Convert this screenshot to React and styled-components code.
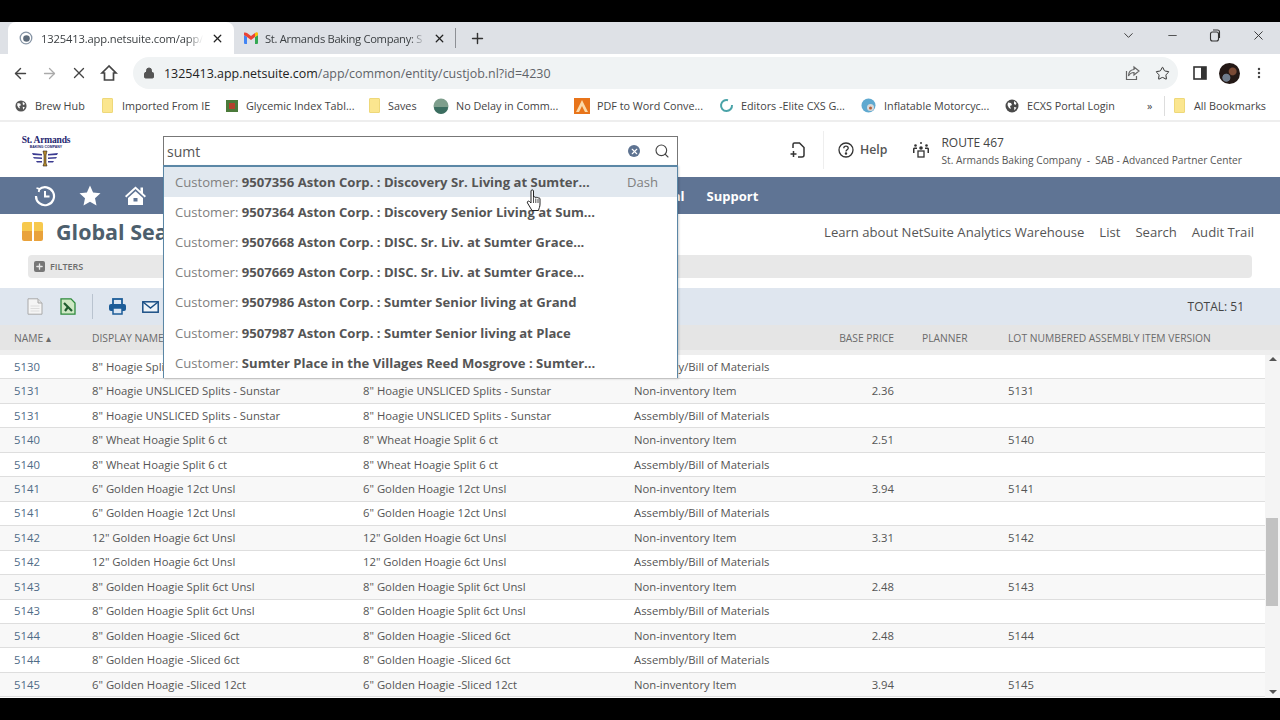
import React from "react";
import styled, { createGlobalStyle } from "styled-components";
import { ArrowLeft, ArrowRight, X, Lock, Star, Plus, ChevronDown, Minus, MoreVertical, Search } from "lucide-react";

const Global = createGlobalStyle`
  html, body { margin: 0; padding: 0; background: #fff; overflow: hidden; }
  * { box-sizing: border-box; }
  #root { width: 1280px; height: 720px; overflow: hidden; }
`;

const Page = styled.div`
  width: 1280px; height: 720px; display: flex; flex-direction: column;
  background: #000; font-family: "Open Sans", sans-serif; color: #444; overflow: hidden;
`;
const Letterbox = styled.div`height: ${p => p.$h}px; flex: none; background: #000;`;

/* browser chrome */
const TabStrip = styled.div`
  height: 32px; flex: none; background: #dee1e6; display: flex; align-items: stretch; padding-left: 8px; position: relative;
`;
const Tab = styled.div`
  width: ${p => p.$w}px; display: flex; align-items: center; padding-left: ${p => p.$pad}px; gap: ${p => p.$gap}px;
  border-radius: 8px 8px 0 0; background: ${p => (p.$active ? "#fff" : "transparent")};
  font: 11.2px "Open Sans", sans-serif; color: #3c4043; letter-spacing: ${p => p.$track ?? 0}px;
  svg { flex: none; }
`;
const TabTitle = styled.span`
  flex: 1; min-width: 0; overflow: hidden; white-space: nowrap;
  mask-image: linear-gradient(to right, #000 90%, transparent 100%);
  -webkit-mask-image: linear-gradient(to right, #000 90%, transparent 100%);
`;
const TabClose = styled.span`display: flex; flex: none; margin-right: ${p => p.$mr}px; color: #222;`;
const TabDivider = styled.span`width: 1px; height: 20px; background: #8d9095; align-self: center;`;
const NewTab = styled.span`display: flex; margin-left: 13px; align-self: center; color: #333;`;
const WindowControls = styled.div`
  margin-left: auto; display: flex; align-items: center; color: #333; padding: 0 14px 6px 0; gap: 30px;
`;
const Toolbar = styled.div`
  height: 38px; flex: none; background: #fff; display: flex; align-items: center; padding-left: 12px; color: #444;
`;
const NavIcons = styled.div`display: flex; align-items: center; gap: 12px; width: 121px;`;
const AddressBar = styled.div`
  width: 1045px; height: 32px; border-radius: 16px; background: #f0f3f4; display: flex; align-items: center;
  padding: 0 8px 0 10px; font: 12.45px "Open Sans", sans-serif; color: #5f6368;
`;
const UrlHost = styled.span`color: #222;`;
const UrlText = styled.span`margin-left: 9px; flex: 1; white-space: nowrap;`;
const AddressActions = styled.div`display: flex; align-items: center; gap: 14px; color: #444;`;
const ToolRight = styled.div`display: flex; align-items: center; margin-left: 15px; gap: 12px;`;
const Avatar = styled.span`
  width: 21px; height: 21px; border-radius: 50%;
  background: radial-gradient(circle at 35% 70%, #6f7c8c 0 18%, transparent 22%), radial-gradient(circle at 65% 40%, #7a4a35 0 18%, #231815 24%);
`;
const Bookmarks = styled.div`
  height: 30px; flex: none; background: #fff; display: flex; align-items: center; padding: 0 0 1px 15px;
  border-bottom: 2px solid #eee; font: 10.8px "Open Sans", sans-serif; color: #444;
`;
const Bookmark = styled.span`
  display: flex; align-items: center; gap: ${p => p.$gap ?? 8}px; width: ${p => p.$w}px; white-space: nowrap; flex: none;
`;
const FolderMark = styled.span`width: 11px; height: 15px; background: #fbe68f; border: 1px solid #eed879; border-radius: 1px; flex: none;`;
const BookmarkDivider = styled.span`width: 1px; height: 20px; background: #ddd; margin: 0 9px 0 5px;`;

/* app header */
const Header = styled.div`height: 55px; flex: none; background: #fff; display: flex; align-items: center; position: relative;`;
const Logo = styled.div`
  width: 163px; padding-left: 21px; display: flex; flex-direction: column; align-items: flex-start; margin-top: 3px; color: #25256f;
`;
const LogoName = styled.span`font: bold 9.5px/10px "Liberation Serif", serif; width: 50px; text-align: center; white-space: nowrap; letter-spacing: -0.2px;`;
const LogoSub = styled.span`font: bold 3.5px/5px "Liberation Sans", sans-serif; width: 50px; text-align: center; white-space: nowrap;`;
const LogoMark = styled.svg`margin-left: 9px; display: block;`;
const SearchWrap = styled.div`width: 515px; height: 30px; position: relative; align-self: flex-start; margin-top: 14px;`;
const SearchBox = styled.div`
  height: 30px; border: 1px solid #777; background: #fff; display: flex; align-items: center; padding: 0 7px 0 3px; color: #555;
  font: 14px "Open Sans", sans-serif;
`;
const SearchValue = styled.span`flex: 1;`;
const SearchClear = styled.span`
  width: 12px; height: 12px; border-radius: 50%; background: #5e7391; color: #fff; display: flex; align-items: center; justify-content: center; margin-right: 14px;
`;
const Dropdown = styled.div`
  position: absolute; top: 29px; left: 0; width: 515px; height: 213px; background: #fff; z-index: 5;
  border: 1px solid #5b87a6; border-top-width: 2px; box-shadow: 1px 1px 2px rgba(0,0,0,.18);
`;
const Suggestion = styled.div`
  height: 30.1px; display: flex; align-items: center; padding: 0 19px 0 11px; position: relative;
  background: ${p => (p.$active ? "#e1e8ef" : "#fff")}; font: 13.1px "Open Sans", sans-serif; color: #808080; white-space: nowrap;
`;
const SuggestionName = styled.b`color: #555; font-weight: 700; margin-left: 3.5px; flex: 1;`;
const SuggestionKind = styled.span`color: #808080;`;
const Cursor = styled.svg`position: absolute; left: 362px; top: 22px; z-index: 6;`;
const HeaderTools = styled.div`display: flex; align-items: center; margin-left: 111px; color: #333;`;
const ToolDivider = styled.span`width: 1px; height: 38px; background: #eee; margin: 0 14px 0 16px;`;
const HelpLabel = styled.span`font: 600 12.3px "Open Sans", sans-serif; color: #555; margin: 0 25px 0 6px;`;
const Role = styled.div`display: flex; flex-direction: column; margin: 4px 0 0 11px; gap: 3px;`;
const RoleName = styled.span`font: 12px/14px "Open Sans", sans-serif; color: #444;`;
const RoleCompany = styled.span`font: 10.2px/14px "Open Sans", sans-serif; color: #555; white-space: pre;`;

/* navigation */
const Nav = styled.div`
  height: 37px; flex: none; background: #5f7494; display: flex; align-items: center; padding-left: 34px; color: #fff;
`;
const NavIconSet = styled.div`display: flex; align-items: center; gap: 23px;`;
const NavLink = styled.span`
  font: 700 13px "Open Sans", sans-serif; color: #fff; white-space: nowrap; margin: 1px 0 0 ${p => p.$ml}px;
`;

/* page title */
const TitleRow = styled.div`
  height: 41px; flex: none; background: #fff; display: flex; align-items: center; padding: 0 26px 0 22px; position: relative;
`;
const TitleIcon = styled.span`
  width: 21px; height: 19px; margin-top: -7px; border-radius: 2px;
  background: linear-gradient(#f7c94d 0 45%, #e9a23b 45%);
  display: flex; justify-content: center;
`;
const TitleSplit = styled.span`width: 2px; height: 100%; background: #fff;`;
const Title = styled.h1`
  margin: -7px 0 0 13px; font: 700 21.5px "Open Sans", sans-serif; color: #4d5f6d;
`;
const TitleLinks = styled.div`margin-left: auto; display: flex; gap: 15px; font: 13.1px "Open Sans", sans-serif; color: #555; margin-top: -6px;`;
const FilterBar = styled.div`height: 33px; flex: none; background: #fff; padding: 0 28px; display: flex; align-items: flex-start;`;
const FilterInner = styled.div`
  height: 23px; flex: 1; background: #e8e8e8; border-radius: 4px; display: flex; align-items: center; padding: 0 0 1px 6px;
  font: 600 9px "Open Sans", sans-serif; color: #6c6c6c; gap: 5px;
`;
const FilterPlus = styled.span`
  width: 11px; height: 11px; border-radius: 2px; background: #777; color: #e8e8e8; display: flex; align-items: center; justify-content: center;
`;
const ListTools = styled.div`
  height: 37px; flex: none; background: #dfe6ef; display: flex; align-items: center; padding: 0 36px 0 27px;
`;
const ToolIconSet = styled.div`display: flex; align-items: center; gap: ${p => p.$gap}px;`;
const ToolSep = styled.span`width: 1px; height: 25px; background: #b9c3cf; margin: 0 15px 0 16px;`;
const Total = styled.span`margin-left: auto; font: 12px "Open Sans", sans-serif; color: #444;`;

/* table */
const columns = "92px 271px 271px 180px 80px 114px 1fr";
const HeadRow = styled.div`
  height: 25px; flex: none; display: grid; grid-template-columns: ${columns}; align-items: center; background: #e5e5e5;
  font: 10.3px "Open Sans", sans-serif; color: #6b6b6b; text-transform: uppercase; white-space: nowrap;
`;
const Gap = styled.div`height: 5px; flex: none; background: #eee;`;
const Body = styled.div`flex: 1; min-height: 0; display: flex; background: #fff; overflow: hidden;`;
const Rows = styled.div`flex: 1; min-width: 0; display: grid; grid-auto-rows: 24.46px;`;
const Row = styled.div`
  display: grid; grid-template-columns: ${columns}; align-items: center; white-space: nowrap; padding-bottom: 1px;
  font: 11.3px "Open Sans", sans-serif; color: #555;
  background: ${p => (p.$tint ? "#f8f8f8" : "#fff")}; border-bottom: 1px solid #dedede;
`;
const NameCell = styled.span`padding-left: 14px;`;
const IdLink = styled.span`color: #4f6b87; padding-left: 14px;`;
const PriceCell = styled.span`text-align: right;`;
const PlannerCell = styled.span`padding-left: 28px;`;
const Scrollbar = styled.div`
  width: 15px; flex: none; background: #f4f4f4; display: flex; flex-direction: column; align-items: center; justify-content: space-between; padding: 2px 0 4px; position: relative;
`;
const ScrollThumb = styled.div`
  position: absolute; top: 163px; left: 1px; width: 12px; height: 88px; background: #c2c2c2;
`;
const Arrow = styled.span`
  width: 0; height: 0; border-left: 4px solid transparent; border-right: 4px solid transparent;
  ${p => (p.$up ? "border-bottom: 4px solid #555;" : "border-top: 4px solid #555;")}
`;

const Gmail = () => (
  <svg width="14" height="12" viewBox="0 0 14 12">
    <path d="M0 3v8a1 1 0 0 0 1 1h2V5z" fill="#4285f4" />
    <path d="M14 3v8a1 1 0 0 1-1 1h-2V5z" fill="#34a853" />
    <path d="M0 3l3 2 4 3 4-3V1l-4 3-4-3L1 0.4C.4 0.2 0 1 0 2z" fill="#ea4335" />
    <path d="M11 1l1.3-.7C13.2 0 14 .7 14 1.6V3l-3 2z" fill="#fbbc04" />
  </svg>
);
const Globe = ({ c = "#555", s = 14 }) => (
  <svg width={s} height={s} viewBox="0 0 14 14">
    <circle cx="7" cy="7" r="6.5" fill={c} />
    <path d="M3 3.5l3 .5 1 2-2 1 1 3-2-1-1.500-3zM9 2l2.500 2-1 2-1.500-1zM9 8l2.500.5-2 3z" fill="#fff" />
  </svg>
);
const Restore = () => (
  <svg width="12" height="13" viewBox="0 0 12 13" fill="none" stroke="#333" strokeWidth="1.100">
    <rect x="1.500" y="3" width="8" height="9" rx="2" />
    <path d="M4 1h4.500A2 2 0 0 1 10.500 3v6" />
  </svg>
);
const BrowserHome = () => (
  <svg width="18" height="18" viewBox="0 0 18 18" fill="none" stroke="#444" strokeWidth="1.700" strokeLinejoin="miter">
    <path d="M9 2L2 9h2.500v7h9V9H16z" />
  </svg>
);
const Share = () => (
  <svg width="16" height="16" viewBox="0 0 16 16" fill="none" stroke="#666" strokeWidth="1.200">
    <path d="M9 2l5 4-5 4V7.500C6 7.500 4.500 9 3.500 11 3.500 7.500 5.500 4.800 9 4.500z" />
    <path d="M1.500 6v8.500h10V11" />
  </svg>
);
const SidePanel = () => (
  <svg width="14" height="14" viewBox="0 0 14 14">
    <rect x="1" y="1" width="12" height="12" fill="#fff" stroke="#333" strokeWidth="1.600" />
    <rect x="8" y="1" width="5" height="12" fill="#333" />
  </svg>
);
const ChromeLoad = () => (
  <svg width="14" height="14" viewBox="0 0 14 14" fill="none">
    <circle cx="7" cy="7" r="5.800" stroke="#8795a5" strokeWidth="1.300" />
    <circle cx="7.500" cy="7.500" r="3.300" fill="#5d6b7a" />
  </svg>
);
const AppIconAdd = () => (
  <svg width="18" height="18" viewBox="0 0 18 18" fill="none" stroke="#333" strokeWidth="1.500">
    <path d="M4 7V3.500C4 3 4.400 2 5.500 2H10.500L15 6.500V14C15 15 14.300 16 13 16H9" />
    <path d="M4.500 10v6M1.500 13h6" />
  </svg>
);
const HelpIcon = () => (
  <svg width="16" height="16" viewBox="0 0 16 16" fill="none" stroke="#333" strokeWidth="1.300">
    <circle cx="8" cy="8" r="7" />
    <path d="M5.800 6.300C5.800 5 6.800 4.200 8 4.200S10.200 5 10.200 6.200C10.200 7.600 8 7.900 8 9.400" />
    <circle cx="8" cy="11.500" r=".6" fill="#333" />
  </svg>
);
const RoleIcon = () => (
  <svg width="18" height="18" viewBox="0 0 18 18" fill="#333">
    <rect x="6" y="10" width="6" height="6" fill="none" stroke="#333" strokeWidth="1.300" />
    <circle cx="9" cy="7" r="1.800" />
    <circle cx="9" cy="2" r="1" />
    <circle cx="3.500" cy="4.500" r="1.300" />
    <circle cx="14.500" cy="4.500" r="1.300" />
    <path d="M1 12V8c0-1 .7-1.500 1.500-1.500H5V8H2.500v4zM17 12V8c0-1-.7-1.500-1.500-1.500H13V8h2.500v4z" />
  </svg>
);
const HistoryIcon = () => (
  <svg width="22" height="22" viewBox="0 0 22 22" fill="none" stroke="#fff" strokeWidth="2.200">
    <path d="M5 4.500A9 9 0 1 1 2 11" />
    <path d="M2.500 3l3 .8-.8 3.200" strokeWidth="1.800" />
    <path d="M11 6v5.500h4.500" strokeWidth="2" />
  </svg>
);
const NavStar = () => (
  <svg width="22" height="21" viewBox="0 0 22 21">
    <path d="M11 0.500l3.100 6.900 7.400.8-5.500 5 1.500 7.300L11 16.800 4.500 20.500 6 13.200.5 8.200l7.400-.8z" fill="#fff" />
  </svg>
);
const HomeIcon = () => (
  <svg width="23" height="21" viewBox="0 0 23 21">
    <path d="M11.500 1.500L1 11l1.300 1.400L11.500 4l9.200 8.400L22 11l-3-2.700V2.500h-2.500v3.500z" fill="#fff" />
    <path d="M4 13l7.500-6.800L19 13v7H4z" fill="#fff" />
    <rect x="9.500" y="13" width="4" height="3.500" fill="#5f7494" />
  </svg>
);
const DocIcon = () => (
  <svg width="16" height="17" viewBox="0 0 16 17">
    <path d="M1 .8h10L15 5v11.200H1z" fill="#f5f5f5" stroke="#a9a9a9" />
    <path d="M11 1v4h4" fill="#e3e3e3" stroke="#a9a9a9" />
    <path d="M3.500 8h9M3.500 10.500h9M3.500 13h9" stroke="#ddd" />
  </svg>
);
const ExcelIcon = () => (
  <svg width="16" height="17" viewBox="0 0 16 17">
    <path d="M1 .8h10L15 5v11.200H1z" fill="#cfe8c4" stroke="#2f8a3c" strokeWidth="1.300" />
    <path d="M4 5l8 8M5 13l3-4" stroke="#1f5d2e" strokeWidth="2.200" />
  </svg>
);
const PrintIcon = () => (
  <svg width="19" height="17" viewBox="0 0 19 17">
    <rect x="5" y="1" width="9" height="6" fill="#dbe6f3" stroke="#1c5c98" strokeWidth="1.800" />
    <rect x="1" y="6" width="17" height="7" rx="2" fill="#1c5c98" />
    <rect x="5" y="10" width="9" height="6" fill="#dbe6f3" stroke="#1c5c98" strokeWidth="1.500" />
  </svg>
);
const MailIcon = () => (
  <svg width="17" height="12" viewBox="0 0 17 12" fill="#eef3f8" stroke="#1b4f85" strokeWidth="1.500">
    <rect x=".8" y=".8" width="15.400" height="10.400" />
    <path d="M1 1l7.500 6L16 1" fill="none" />
  </svg>
);
const LogoEmblem = () => (
  <LogoMark width="30" height="17" viewBox="0 0 30 17">
    <path d="M2 3l10 1v1.500L3 5zM28 3L18 4v1.500L27 5zM3 7l9 .5V9L4 8.500zM27 7l-9 .5V9l8-.5zM6 11l6 0v1.500H7zM24 11l-6 0v1.500h5z" fill="#3a3a90" />
    <path d="M13 1h4l-1 4v8l1 3h-4l1-3V5z" fill="#b58a2a" stroke="#2c2020" strokeWidth=".6" />
  </LogoMark>
);
const Hand = () => (
  <Cursor width="16" height="24" viewBox="0 0 16 24">
    <path d="M5 2c0-1.500 2.500-1.500 2.500 0v6.500c.3-1 2.200-1 2.300.3.400-.9 2-.8 2.200.4.500-.6 2-.5 2 .8v5c0 3-1 4-1.500 6.500H6L1.500 14c-.8-1.200.7-2.600 2-1.500L5 14z" fill="#fff" stroke="#222" strokeWidth="1" />
    <path d="M7.500 9v5M9.800 9.500V14M12 10v4" stroke="#222" strokeWidth=".8" />
  </Cursor>
);

const suggestions = [
  ["9507356 Aston Corp. : Discovery Sr. Living at Sumter...", "Dash"],
  ["9507364 Aston Corp. : Discovery Senior Living at Sum..."],
  ["9507668 Aston Corp. : DISC. Sr. Liv. at Sumter Grace..."],
  ["9507669 Aston Corp. : DISC. Sr. Liv. at Sumter Grace..."],
  ["9507986 Aston Corp. : Sumter Senior living at Grand"],
  ["9507987 Aston Corp. : Sumter Senior living at Place"],
  ["Sumter Place in the Villages Reed Mosgrove : Sumter..."],
];

const NI = "Non-inventory Item";
const AB = "Assembly/Bill of Materials";
const rows = [
  ["5130", '8" Hoagie Splits', "", AB, "", ""],
  ["5131", '8" Hoagie UNSLICED Splits - Sunstar', '8" Hoagie UNSLICED Splits - Sunstar', NI, "2.36", "5131"],
  ["5131", '8" Hoagie UNSLICED Splits - Sunstar', '8" Hoagie UNSLICED Splits - Sunstar', AB, "", ""],
  ["5140", '8" Wheat Hoagie Split 6 ct', '8" Wheat Hoagie Split 6 ct', NI, "2.51", "5140"],
  ["5140", '8" Wheat Hoagie Split 6 ct', '8" Wheat Hoagie Split 6 ct', AB, "", ""],
  ["5141", '6" Golden Hoagie 12ct Unsl', '6" Golden Hoagie 12ct Unsl', NI, "3.94", "5141"],
  ["5141", '6" Golden Hoagie 12ct Unsl', '6" Golden Hoagie 12ct Unsl', AB, "", ""],
  ["5142", '12" Golden Hoagie 6ct Unsl', '12" Golden Hoagie 6ct Unsl', NI, "3.31", "5142"],
  ["5142", '12" Golden Hoagie 6ct Unsl', '12" Golden Hoagie 6ct Unsl', AB, "", ""],
  ["5143", '8" Golden Hoagie Split 6ct Unsl', '8" Golden Hoagie Split 6ct Unsl', NI, "2.48", "5143"],
  ["5143", '8" Golden Hoagie Split 6ct Unsl', '8" Golden Hoagie Split 6ct Unsl', AB, "", ""],
  ["5144", '8" Golden Hoagie -Sliced 6ct', '8" Golden Hoagie -Sliced 6ct', NI, "2.48", "5144"],
  ["5144", '8" Golden Hoagie -Sliced 6ct', '8" Golden Hoagie -Sliced 6ct', AB, "", ""],
  ["5145", '6" Golden Hoagie -Sliced 12ct', '6" Golden Hoagie -Sliced 12ct', NI, "3.94", "5145"],
];

export default function App() {
  return (
    <Page>
      <Global />
      <Letterbox $h={22} />
      <TabStrip>
        <Tab $active $w={226} $pad={11} $gap={8} $track={-0.15}>
          <ChromeLoad />
          <TabTitle>1325413.app.netsuite.com/app/</TabTitle>
          <TabClose $mr={10}><X size={13} strokeWidth={2.4} /></TabClose>
        </Tab>
        <Tab $w={221} $pad={10} $gap={7} $track={-0.3}>
          <Gmail />
          <TabTitle>St. Armands Baking Company: S</TabTitle>
          <TabClose $mr={9}><X size={13} strokeWidth={2.4} /></TabClose>
        </Tab>
        <TabDivider />
        <NewTab><Plus size={17} strokeWidth={2} /></NewTab>
        <WindowControls>
          <ChevronDown size={15} strokeWidth={1.500} />
          <Minus size={13} strokeWidth={1.500} />
          <Restore />
          <X size={15} strokeWidth={1.500} />
        </WindowControls>
      </TabStrip>
      <Toolbar>
        <NavIcons>
          <ArrowLeft size={17} strokeWidth={2} />
          <ArrowRight size={17} strokeWidth={1.800} color="#aaa" />
          <X size={18} strokeWidth={1.800} />
          <BrowserHome />
        </NavIcons>
        <AddressBar>
          <Lock size={12} fill="#555" color="#555" strokeWidth={2} />
          <UrlText><UrlHost>1325413.app.netsuite.com</UrlHost>/app/common/entity/custjob.nl?id=4230</UrlText>
          <AddressActions>
            <Share />
            <Star size={15} strokeWidth={1.600} color="#333" />
          </AddressActions>
        </AddressBar>
        <ToolRight>
          <SidePanel />
          <Avatar />
          <MoreVertical size={14} strokeWidth={2.200} color="#444" />
        </ToolRight>
      </Toolbar>
      <Bookmarks>
        <Bookmark $w={87} $gap={8}><Globe s={12} />Brew Hub</Bookmark>
        <Bookmark $w={124} $gap={9}><FolderMark />Imported From IE</Bookmark>
        <Bookmark $w={143} $gap={8}>
          <svg width="12" height="12" viewBox="0 0 12 12"><rect width="12" height="12" fill="#4b7a3a" /><rect x="3" y="3" width="6" height="6" fill="#b3402c" /></svg>
          Glycemic Index Tabl...
        </Bookmark>
        <Bookmark $w={64}><FolderMark />Saves</Bookmark>
        <Bookmark $w={141} $gap={7}>
          <svg width="16" height="16" viewBox="0 0 16 16"><circle cx="8" cy="8" r="7.500" fill="#7e9e8c" /><path d="M1 9h14a7 7 0 0 1-14 0z" fill="#3b6d60" /></svg>
          No Delay in Comm...
        </Bookmark>
        <Bookmark $w={145} $gap={7}>
          <svg width="16" height="16" viewBox="0 0 16 16"><rect width="16" height="16" fill="#e8741a" /><path d="M2 14L8 2l6 12-3 0-3-6-3 6z" fill="#fbd9a8" /></svg>
          PDF to Word Conve...
        </Bookmark>
        <Bookmark $w={142} $gap={7}>
          <svg width="15" height="15" viewBox="0 0 15 15" fill="none"><path d="M9 2.200A5.500 5.500 0 1 0 13 7" stroke="#4aa3a8" strokeWidth="2" /></svg>
          Editors -Elite CXS G...
        </Bookmark>
        <Bookmark $w={144} $gap={8}>
          <svg width="15" height="15" viewBox="0 0 15 15"><circle cx="7.500" cy="7.500" r="7" fill="#5fa9d0" /><circle cx="9.500" cy="9.500" r="3.500" fill="#d8d8d8" /><circle cx="9.500" cy="10" r="1.500" fill="#b5603a" /></svg>
          Inflatable Motorcyc...
        </Bookmark>
        <Bookmark $w={142} $gap={8}><Globe c="#4a4a4a" />ECXS Portal Login</Bookmark>
        <Bookmark $w={12}>»</Bookmark>
        <BookmarkDivider />
        <Bookmark $w={94} $gap={9}><FolderMark />All Bookmarks</Bookmark>
      </Bookmarks>
      <Header>
        <Logo>
          <LogoName>St. Armands</LogoName>
          <LogoSub>BAKING COMPANY</LogoSub>
          <LogoEmblem />
        </Logo>
        <SearchWrap>
          <SearchBox>
            <SearchValue>sumt</SearchValue>
            <SearchClear><X size={9} strokeWidth={3} /></SearchClear>
            <Search size={16} strokeWidth={1.700} color="#444" />
          </SearchBox>
          <Dropdown>
            {suggestions.map(([name, kind], i) => (
              <Suggestion key={name + i} $active={i === 0}>
                Customer:<SuggestionName>{name}</SuggestionName>
                {kind && <SuggestionKind>{kind}</SuggestionKind>}
              </Suggestion>
            ))}
            <Hand />
          </Dropdown>
        </SearchWrap>
        <HeaderTools>
          <AppIconAdd />
          <ToolDivider />
          <HelpIcon />
          <HelpLabel>Help</HelpLabel>
          <RoleIcon />
          <Role>
            <RoleName>ROUTE 467</RoleName>
            <RoleCompany>St. Armands Baking Company  -  SAB - Advanced Partner Center</RoleCompany>
          </Role>
        </HeaderTools>
      </Header>
      <Nav>
        <NavIconSet>
          <HistoryIcon />
          <NavStar />
          <HomeIcon />
        </NavIconSet>
        <NavLink $ml={479}>Financial</NavLink>
        <NavLink $ml={22}>Support</NavLink>
      </Nav>
      <TitleRow>
        <TitleIcon><TitleSplit /></TitleIcon>
        <Title>Global Search</Title>
        <TitleLinks>
          <span>Learn about NetSuite Analytics Warehouse</span>
          <span>List</span>
          <span>Search</span>
          <span>Audit Trail</span>
        </TitleLinks>
      </TitleRow>
      <FilterBar>
        <FilterInner>
          <FilterPlus><Plus size={9} strokeWidth={3.500} /></FilterPlus>
          FILTERS
        </FilterInner>
      </FilterBar>
      <ListTools>
        <ToolIconSet $gap={17}><DocIcon /><ExcelIcon /></ToolIconSet>
        <ToolSep />
        <ToolIconSet $gap={15}><PrintIcon /><MailIcon /></ToolIconSet>
        <Total>TOTAL: 51</Total>
      </ListTools>
      <HeadRow>
        <NameCell>Name ▴</NameCell>
        <span>Display Name</span>
        <span />
        <span />
        <PriceCell>Base Price</PriceCell>
        <PlannerCell>Planner</PlannerCell>
        <span>Lot Numbered Assembly Item Version</span>
      </HeadRow>
      <Gap />
      <Body>
        <Rows>
          {rows.map(([id, name, desc, type, price, lot], i) => (
            <Row key={i} $tint={i % 2 === 1}>
              <IdLink>{id}</IdLink>
              <span>{name}</span>
              <span>{desc}</span>
              <span>{type}</span>
              <PriceCell>{price}</PriceCell>
              <PlannerCell />
              <span>{lot}</span>
            </Row>
          ))}
        </Rows>
        <Scrollbar>
          <Arrow $up />
          <ScrollThumb />
          <Arrow />
        </Scrollbar>
      </Body>
      <Letterbox $h={22} />
    </Page>
  );
}
